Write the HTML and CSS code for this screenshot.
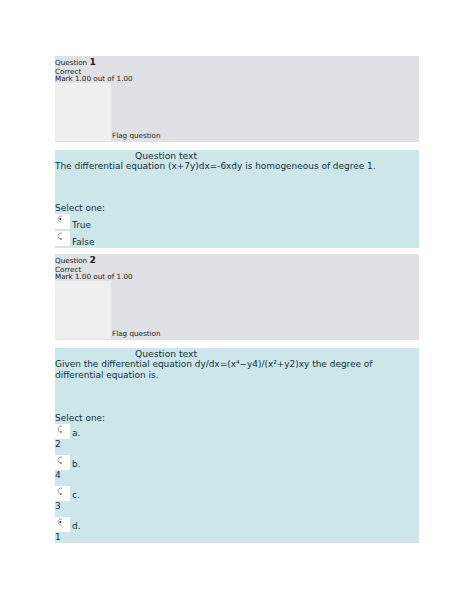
FILE: index.html
```html
<!DOCTYPE html>
<html>
<head>
<meta charset="utf-8">
<link rel="stylesheet" href="styles.css">
</head>
<body>
<div class="page">
  <div class="info">
    <div class="meta">
      <div class="l1">Question <span class="qno">1</span></div>
      <div class="ln">Correct</div>
      <div class="ln">Mark 1.00 out of 1.00</div>
    </div>
    <div class="panel"></div>
    <div class="flag">Flag question</div>
  </div>
  <div class="formulation q1">
    <div class="qh">Question text</div>
    <div class="qt">The differential equation (x+7y)dx=-6xdy is homogeneous of degree 1.</div>
    <div class="prompt">Select one:</div>
    <div class="opt">
      <span class="sq"><svg class="rd" viewBox="0 0 6 8" width="6" height="8"><path d="M4.8 1.2 A2.9 2.9 0 1 0 4.8 6.8" fill="none" stroke="#6e6e6e" stroke-width="0.9" stroke-dasharray="1.5 0.5"/><circle cx="3.4" cy="4" r="1" fill="#222"/></svg></span>
      <span class="lbl">True</span>
    </div>
    <div class="opt">
      <span class="sq"><svg class="rd" viewBox="0 0 6 8" width="6" height="8"><path d="M4.8 1.2 A2.9 2.9 0 1 0 4.8 6.8" fill="none" stroke="#6e6e6e" stroke-width="0.9" stroke-dasharray="1.5 0.5"/><circle cx="4" cy="7" r="0.7" fill="#333"/></svg></span>
      <span class="lbl">False</span>
    </div>
  </div>

  <div class="info second">
    <div class="meta">
      <div class="l1">Question <span class="qno">2</span></div>
      <div class="ln">Correct</div>
      <div class="ln">Mark 1.00 out of 1.00</div>
    </div>
    <div class="panel"></div>
    <div class="flag">Flag question</div>
  </div>
  <div class="formulation">
    <div class="qh">Question text</div>
    <div class="qt">Given the differential equation dy/dx=(x⁴−y4)/(x²+y2)xy the degree of differential equation is.</div>
    <div class="prompt">Select one:</div>
    <div class="ans">
      <div class="arow">
        <span class="sq"><svg class="rd" viewBox="0 0 6 8" width="6" height="8"><path d="M4.8 1.2 A2.9 2.9 0 1 0 4.8 6.8" fill="none" stroke="#6e6e6e" stroke-width="0.9" stroke-dasharray="1.5 0.5"/><circle cx="4" cy="7" r="0.7" fill="#333"/></svg></span>
        <span class="lbl">a.</span>
      </div>
      <div class="aval">2</div>
    </div>
    <div class="ans">
      <div class="arow">
        <span class="sq"><svg class="rd" viewBox="0 0 6 8" width="6" height="8"><path d="M4.8 1.2 A2.9 2.9 0 1 0 4.8 6.8" fill="none" stroke="#6e6e6e" stroke-width="0.9" stroke-dasharray="1.5 0.5"/><circle cx="4" cy="7" r="0.7" fill="#333"/></svg></span>
        <span class="lbl">b.</span>
      </div>
      <div class="aval">4</div>
    </div>
    <div class="ans">
      <div class="arow">
        <span class="sq"><svg class="rd" viewBox="0 0 6 8" width="6" height="8"><path d="M4.8 1.2 A2.9 2.9 0 1 0 4.8 6.8" fill="none" stroke="#6e6e6e" stroke-width="0.9" stroke-dasharray="1.5 0.5"/><circle cx="4" cy="7" r="0.7" fill="#333"/></svg></span>
        <span class="lbl">c.</span>
      </div>
      <div class="aval">3</div>
    </div>
    <div class="ans">
      <div class="arow">
        <span class="sq"><svg class="rd" viewBox="0 0 6 8" width="6" height="8"><path d="M4.8 1.2 A2.9 2.9 0 1 0 4.8 6.8" fill="none" stroke="#6e6e6e" stroke-width="0.9" stroke-dasharray="1.5 0.5"/><circle cx="3.4" cy="4" r="1" fill="#222"/></svg></span>
        <span class="lbl">d.</span>
      </div>
      <div class="aval">1</div>
    </div>
  </div>
</div>
</body>
</html>
```

FILE: styles.css
```css
html, body {
  margin: 0;
  padding: 0;
  background: #ffffff;
}
body {
  font-family: "DejaVu Sans", Verdana, sans-serif;
}
.page {
  padding: 56px 0 0 55px;
  width: 364px;
}
.info {
  background: #dfe1e5;
  height: 86px;
  display: grid;
  grid-template-columns: 56px 1fr;
  grid-template-rows: auto 1fr;
  color: #222;
  font-size: 7.2px;
}
.info.second {
  margin-top: 6px;
}
.meta {
  grid-column: 1 / 3;
  padding-top: 2px;
}
.l1 {
  height: 9.8px;
  line-height: 9.8px;
}
.qno {
  font-size: 9.2px;
  font-weight: bold;
  line-height: 0;
}
.ln {
  line-height: 7.6px;
}
.panel {
  grid-column: 1;
  grid-row: 2;
  background: #efefef;
  margin-bottom: 1.5px;
}
.flag {
  grid-column: 2;
  grid-row: 2;
  align-self: end;
  line-height: 8px;
  margin-bottom: 2px;
  padding-left: 1px;
}
.formulation {
  background: #cde6ea;
  margin-top: 8px;
  color: #12323c;
  font-size: 8.95px;
  line-height: 11px;
}
.qh {
  padding-left: 80px;
  font-size: 9.2px;
}
.prompt {
  margin-top: 32px;
}
.q1 .prompt {
  margin-top: 31px;
}
.opt {
  display: flex;
  align-items: flex-end;
}
.sq {
  display: block;
  width: 15px;
  height: 15px;
  background: #ffffff;
  flex: none;
  position: relative;
}
.opt .sq {
  margin-bottom: 2px;
}
.rd {
  position: absolute;
  left: 1.5px;
  top: 1px;
}
.lbl {
  margin-left: 2px;
}
.ans {
  margin-bottom: 5px;
}
.ans:last-child {
  margin-bottom: 0;
}
.arow {
  display: flex;
  align-items: flex-end;
}
```
